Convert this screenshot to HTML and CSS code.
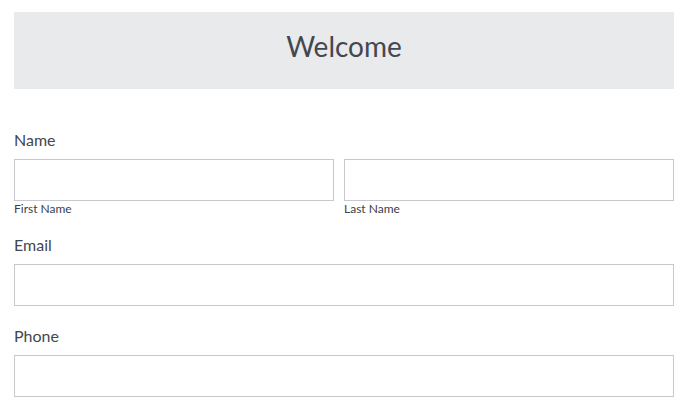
FILE: index.html
```html
<!DOCTYPE html>
<html lang="en">
<head>
<meta charset="UTF-8">
<meta name="viewport" content="width=device-width, initial-scale=1.0">
<title>Welcome</title>
<link rel="stylesheet" href="styles.css">
</head>
<body>
  <div class="form-wrap">
    <header class="banner">
      <h1>Welcome</h1>
    </header>

    <form class="signup">
      <div class="field">
        <label class="field-label">Name</label>
        <div class="name-row">
          <div class="name-part first">
            <input type="text">
            <span class="sub-label">First Name</span>
          </div>
          <div class="name-part">
            <input type="text">
            <span class="sub-label">Last Name</span>
          </div>
        </div>
      </div>

      <div class="field">
        <label class="field-label">Email</label>
        <input type="email">
      </div>

      <div class="field">
        <label class="field-label">Phone</label>
        <input type="tel">
      </div>
    </form>
  </div>
</body>
</html>
```

FILE: styles.css
```css
body {
  margin: 0;
  padding: 0;
  font-family: Lato, "Open Sans", sans-serif;
  background-color: #fff;
  color: #43474f;
}
.form-wrap {
  padding: 12px 15px 0 14px;
}
.banner {
  background-color: #e9eaec;
  height: 77px;
  box-sizing: border-box;
  padding-bottom: 9px;
  display: flex;
  align-items: center;
  justify-content: center;
}
.banner h1 {
  margin: 0;
  font-size: 28px;
  font-weight: 400;
  color: #43474f;
}

.signup {
  padding-top: 41px;
}
.field {
  display: flex;
  flex-direction: column;
  margin-bottom: 20px;
}
.field-label {
  font-size: 16px;
  line-height: 19px;
  color: #43474f;
  margin-bottom: 10px;
}
.name-row {
  display: flex;
  gap: 10px;
}
.name-part {
  flex: 1;
  display: flex;
  flex-direction: column;
}
.name-part.first {
  flex: 0 0 320px;
}
.sub-label {
  font-size: 12px;
  line-height: 15px;
  color: #3a3f4a;
}
.field:first-child {
  margin-bottom: 19px;
}
input {
  box-sizing: border-box;
  height: 42px;
  width: 100%;
  border: 1px solid #c8c9cc;
  border-radius: 0;
  padding: 0 10px;
  font-family: inherit;
  font-size: 14px;
  background: #fff;
}
```
